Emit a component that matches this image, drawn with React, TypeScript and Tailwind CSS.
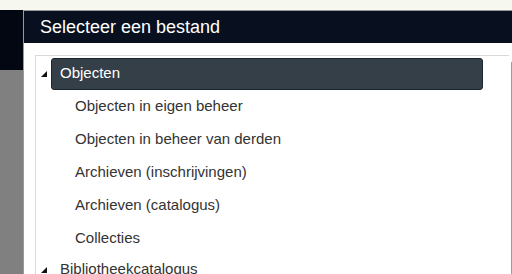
import React from "react";

const Tri = () => (
  <svg width="6" height="6" viewBox="0 0 6 6" className="shrink-0">
    <polygon points="6,0 6,6 0,6" fill="#111" />
  </svg>
);

export default function App() {
  const children = [
    "Objecten in eigen beheer",
    "Objecten in beheer van derden",
    "Archieven (inschrijvingen)",
    "Archieven (catalogus)",
    "Collecties",
  ];
  return (
    <div className="w-[512px] h-[274px] overflow-hidden bg-[#f6f8ef] flex flex-col" style={{ fontFamily: '"Liberation Sans", Arial, sans-serif' }}>
      <div className="h-[10px] shrink-0" />
      <div className="flex flex-1 min-h-0">
        <div className="w-[23px] shrink-0 flex flex-col">
          <div className="h-[60px] bg-[#030711]" />
          <div className="flex-1 bg-[#808080]" />
        </div>
        <div className="flex-1 flex flex-col border-l border-t border-[#9a9a9a] bg-white">
          <div className="h-[32px] shrink-0 bg-[#08101f] text-white text-[18px] flex items-center pl-[16px]">
            Selecteer een bestand
          </div>
          <div className="flex-1 flex pl-[11px] pt-[12px]">
            <div className="flex-1 h-full border-l border-t border-[#d9d9d9] pt-px pr-[26px] mr-[2px]">
              <div className="flex items-center h-[33px]">
                <div className="w-[15px] flex justify-center"><Tri /></div>
                <div className="flex-1 h-[32px] bg-[#353f47] border border-[#1c2730] rounded-[3px] text-white text-[15px] flex items-center pl-[8px]">
                  Objecten
                </div>
              </div>
              {children.map((c) => (
                <div key={c} className="h-[33px] flex items-center pl-[39px] text-[15px] text-[#333]">
                  {c}
                </div>
              ))}
              <div className="flex items-center h-[29px]">
                <div className="w-[15px] flex justify-center"><Tri /></div>
                <div className="pl-[9px] text-[15px] text-[#333]">Bibliotheekcatalogus</div>
              </div>
            </div>
            <div className="w-px mt-[7px] bg-[#9a9a9a]" />
          </div>
        </div>
      </div>
    </div>
  );
}
